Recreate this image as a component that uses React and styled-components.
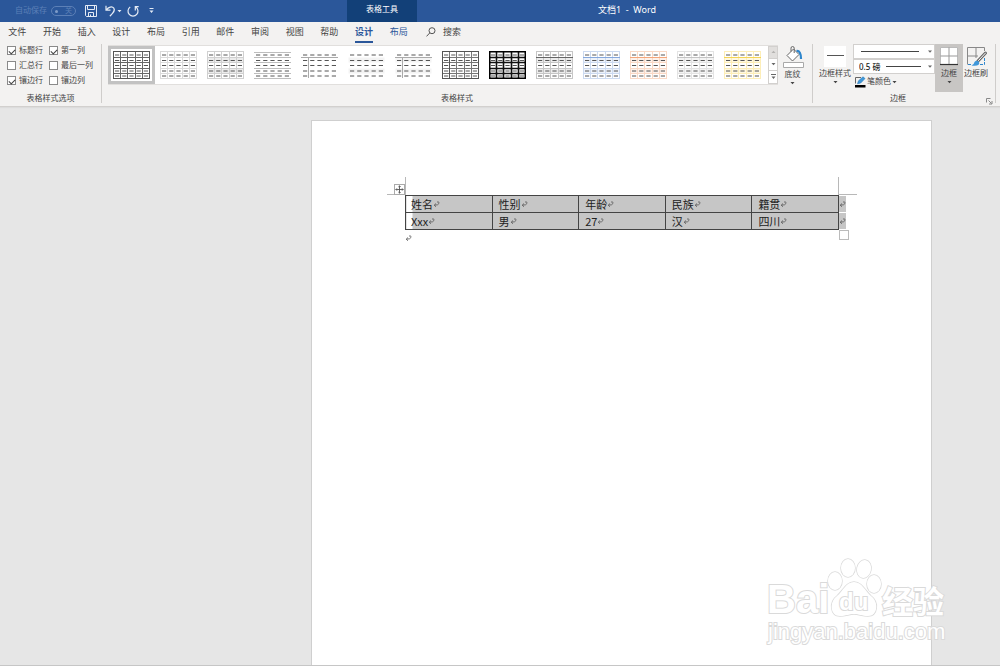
import React from 'react';
import styled, { createGlobalStyle } from 'styled-components';

// constants
const MENU_TABS = ['文件', '开始', '插入', '设计', '布局', '引用', '邮件', '审阅', '视图', '帮助'];

const STYLE_OPTIONS = [
  { id: 'header-row', label: '标题行', checked: true },
  { id: 'first-col', label: '第一列', checked: true },
  { id: 'total-row', label: '汇总行', checked: false },
  { id: 'last-col', label: '最后一列', checked: false },
  { id: 'banded-row', label: '镶边行', checked: true },
  { id: 'banded-col', label: '镶边列', checked: false },
];

const TABLE_STYLES = [
  { name: '网格型', grid: '#666', frame: '#555' },
  { name: '网格型浅色', grid: '#dadada', frame: '#dadada' },
  { name: '无格式表格 1', grid: '#d0d0d0', frame: '#d0d0d0', band: '#ececec' },
  { name: '无格式表格 2', rows: '#bdbdbd' },
  { name: '无格式表格 3', header: '#aaa', column: '#aaa' },
  { name: '无格式表格 4', band: '#f3f3f3' },
  { name: '无格式表格 5', header: '#aaa', column: '#aaa', band: '#f4f4f4' },
  { name: '网格表 1', grid: '#777', frame: '#555', column: '#555' },
  { name: '网格表 2', grid: '#111', frame: '#000', thick: true },
  { name: '网格表 3', grid: '#c6c6c6', frame: '#c6c6c6', header: '#666', band: '#ececec' },
  { name: '网格表 3 蓝色', grid: '#ccdaf0', frame: '#ccdaf0', header: '#86a8dc', band: '#edf2fa' },
  { name: '网格表 3 橙色', grid: '#fad9c6', frame: '#fad9c6', header: '#f4a77c', band: '#fdf1ea' },
  { name: '网格表 3 灰色', grid: '#e3e3e3', frame: '#e3e3e3', header: '#c4c4c4', band: '#f4f4f4' },
  { name: '网格表 3 金色', grid: '#fdeeb8', frame: '#fdeeb8', header: '#f5d556', band: '#fff8e0' },
];

const PEOPLE_HEAD = ['姓名', '性别', '年龄', '民族', '籍贯'];
const PEOPLE_ROW = ['Xxx', '男', '27', '汉', '四川'];

// y positions inside a style thumbnail
const THUMB_LINES = [6.5, 11.5, 17.5, 22.5];
const THUMB_DASHES = [4, 9.5, 14.5, 20, 25];

const GlobalStyle = createGlobalStyle`
  * {
    box-sizing: border-box;
  }

  body {
    margin: 0;
    font-family: 'Liberation Sans', 'Noto Sans CJK SC', sans-serif;
    font-size: 8px;
    color: #444;
  }

  button,
  select,
  input {
    margin: 0;
    padding: 0;
    border: 0;
    background: none;
    color: inherit;
    font: inherit;
  }

  svg {
    display: block;
  }
`;

const AppShell = styled.div`
  display: flex;
  flex-direction: column;
  min-height: 100vh;
  position: relative;
  background: #e6e6e6;
`;

// title bar
const TitleBar = styled.header`
  display: flex;
  height: 22px;
  background: #2b579a;
  color: #fff;
`;

const QuickAccess = styled.div`
  display: flex;
  align-items: center;
  flex: 0 0 347px;
  padding-left: 15px;
`;

const AutoSave = styled.label`
  display: flex;
  align-items: center;
  gap: 4px;
  margin-right: 9px;
  color: #5c80b7;
  line-height: 12px;
`;

const Toggle = styled.button`
  display: flex;
  align-items: center;
  justify-content: space-between;
  width: 25px;
  height: 10px;
  padding: 0 3px;
  border: 1px solid #5c80b7;
  border-radius: 5px;
  color: #5c80b7;
  font-size: 7px;
  line-height: 8px;

  &::before {
    content: '';
    width: 3px;
    height: 3px;
    border-radius: 50%;
    background: #7f9cc8;
  }
`;

const QuickButton = styled.button`
  margin-right: ${({ $after }) => $after || 0}px;
  color: #e4ebf5;
`;

const ContextTitle = styled.div`
  flex: 0 0 70px;
  background: #124078;
  line-height: 20px;
  text-align: center;
`;

const DocTitle = styled.h1`
  flex: 1;
  margin: 0;
  padding-right: 163px;
  font-family: 'Noto Sans', 'Noto Sans CJK SC', sans-serif;
  font-size: 9px;
  font-weight: 400;
  line-height: 20px;
  text-align: center;
  white-space: pre;
`;

// menu tabs
const TabBar = styled.nav`
  display: flex;
  align-items: center;
  height: 22px;
  background: #f3f2f1;
`;

const TabList = styled.div`
  display: grid;
  grid-template-columns: repeat(12, 1fr);
  justify-items: center;
  width: 416px;
`;

const Tab = styled.button`
  height: 20px;
  border-bottom: 2px solid ${({ $active }) => ($active ? '#2b579a' : 'transparent')};
  color: ${({ $context }) => ($context ? '#2b579a' : '#444')};
  font-size: 9px;
  font-weight: ${({ $active }) => ($active ? 700 : 400)};
  line-height: 18px;
`;

const SearchButton = styled.button`
  display: flex;
  align-items: center;
  gap: 7px;
  height: 20px;
  margin-left: 10px;
  padding-bottom: 2px;
  font-size: 9px;
  line-height: 18px;
`;

// ribbon
const Ribbon = styled.section`
  display: flex;
  min-height: 62px;
  border-bottom: 1px solid #d2d0ce;
  background: #f3f2f1;
  box-shadow: 0 1px 1px #dcdcdc;
`;

const Group = styled.div`
  display: flex;
  flex-direction: column;
  flex: ${({ $grow }) => ($grow ? '1' : 'none')};
  min-width: 0;
  position: relative;
`;

const GroupBody = styled.div`
  display: flex;
  height: 48px;
  padding: ${({ $pad }) => $pad || '0'};
`;

const GroupLabel = styled.div`
  padding-right: ${({ $launcher }) => ($launcher ? 12 : 0)}px;
  line-height: 14px;
  text-align: center;
`;

const Divider = styled.div`
  width: 1px;
  margin: 0 0 3px;
  background: #cfcdcb;
`;

const OptionGrid = styled.div`
  display: grid;
  grid-template-columns: 42px 45px;
  grid-auto-rows: 13px;
  row-gap: 2px;
`;

const Option = styled.label`
  display: flex;
  align-items: center;
  gap: 3px;
  line-height: 12px;
  white-space: nowrap;
`;

const CheckBox = styled.input`
  display: grid;
  place-content: center;
  appearance: none;
  width: 9px;
  height: 9px;
  border: 1px solid #8a8a8a;
  background: #fff;

  &:checked::before {
    content: '';
    width: 5px;
    height: 3px;
    border: solid #444;
    border-width: 0 0 1px 1px;
    transform: rotate(-45deg);
  }
`;

const Gallery = styled.div`
  display: flex;
  flex: 1;
  min-width: 0;
  height: 40px;
  border: solid #e1dfdd;
  border-width: 1px 0;
  background: #fff;
`;

const GalleryItems = styled.div`
  display: flex;
  flex: 1;
  overflow: hidden;
`;

const StyleButton = styled.button`
  display: flex;
  align-items: center;
  justify-content: center;
  flex: 0 0 47px;
  border: 3px solid ${({ $selected }) => ($selected ? '#c2c2c2' : 'transparent')};
`;

const GalleryScroll = styled.div`
  display: grid;
  grid-template-rows: repeat(3, 1fr);
  width: 10px;
`;

const ScrollButton = styled.button`
  display: grid;
  place-items: center;
  border: 1px solid #d2d0ce;
  border-top-width: ${({ $first }) => ($first ? 1 : 0)}px;
  background: ${({ $muted }) => ($muted ? '#e1dfdd' : '#fff')};
  color: ${({ $muted }) => ($muted ? '#b5b3b1' : '#666')};
`;

const BigButton = styled.button`
  display: flex;
  flex-direction: column;
  align-items: center;
  flex: 0 0 ${({ $width }) => $width}px;
  height: 48px;
  padding-top: 1px;
  background: ${({ $pressed }) => ($pressed ? '#c8c6c4' : 'none')};
  line-height: 13px;
  white-space: nowrap;
`;

const PenColumn = styled.div`
  display: flex;
  flex-direction: column;
  width: 82px;
`;

const PenField = styled.div`
  display: grid;
  align-items: center;
  height: 15px;
  border: 1px solid #d2d0ce;
  background: #fff;

  > * {
    grid-area: 1 / 1;
  }

  > svg {
    justify-self: end;
    pointer-events: none;
  }
`;

const PenSelect = styled.select`
  appearance: none;
  width: 100%;
  height: 13px;
  padding-left: 5px;
  color: #222;
  font-family: 'Noto Sans', 'Noto Sans CJK SC', sans-serif;
  font-weight: 500;
`;

const PenColor = styled.button`
  display: flex;
  align-items: center;
  gap: 1px;
  height: 15px;
  padding-left: 1px;
  line-height: 12px;
`;

const Launcher = styled.button`
  position: absolute;
  right: 2px;
  bottom: 1px;
`;

// document
const Workspace = styled.main`
  display: flex;
  flex: 1;
  padding: 13px 68px 0 311px;
  border-bottom: 1px solid #c6c6c6;
`;

const Page = styled.article`
  flex: 1;
  padding: 74px 92px 0 93px;
  border: 1px solid #cfcfcf;
  border-bottom: 0;
  background: #fff;
`;

const TableFrame = styled.div`
  position: relative;
`;

const DocTable = styled.table`
  width: 100%;
  border-collapse: collapse;
  table-layout: fixed;
  color: #222;
  font-family: 'Noto Sans CJK SC', sans-serif;
  font-size: 11px;
`;

const Cell = styled.td`
  height: 17px;
  padding: 0 0 0 6px;
  border: 1px solid #444;
  background: #c6c6c6;
  font-weight: 400;
  line-height: 16px;
  text-align: left;

  &:first-child {
    padding-left: 5px;
    background: linear-gradient(to right, #fff 6px, #c6c6c6 6px);
  }
`;

const CellText = styled.span`
  display: flex;
  align-items: center;
`;

const CropMark = styled.span`
  position: absolute;
  top: -18px;
  ${({ $side }) => $side}: 0;
  width: 1px;
  height: 18px;
  background: #b8b8b8;

  &::after {
    content: '';
    position: absolute;
    ${({ $side }) => $side}: -18px;
    bottom: 0;
    width: 18px;
    height: 1px;
    background: #b8b8b8;
  }
`;

const MoveHandle = styled.button`
  position: absolute;
  top: -11px;
  left: -11px;
  border: 1px solid #aaa;
  background: #fff;
`;

const RowEnds = styled.div`
  position: absolute;
  top: 1px;
  left: 100%;
  display: grid;
  gap: 1px;

  > span {
    display: grid;
    place-items: center;
    width: 7px;
    height: 16px;
    background: #c6c6c6;
  }
`;

const ResizeHandle = styled.button`
  position: absolute;
  top: 100%;
  left: 100%;
  width: 10px;
  height: 10px;
  border: 1px solid #bbb;
  background: #fff;
`;

const Paragraph = styled.p`
  margin: 4px 0;
`;

const Watermark = styled.div`
  position: absolute;
  right: 50px;
  bottom: 16px;
  pointer-events: none;
`;

// icons
const Caret = () => (
  <svg width="5" height="4" viewBox="0 0 5 4">
    <path d="M0.5 1h4L2.5 3.2z" fill="currentColor" />
  </svg>
);

const ReturnMark = () => (
  <svg width="7" height="8" viewBox="0 0 7 8" fill="none" stroke="#555" strokeWidth="0.8">
    <path d="M4 2h1.400q.9 0 .6 1.400Q5.500 5.200 1.400 5.200M3 3.500L1.200 5.200 3 6.800" />
  </svg>
);

const SaveIcon = () => (
  <svg width="12" height="12" viewBox="0 0 12 12" fill="none" stroke="currentColor">
    <path d="M.5.5h11v11h-10l-1-1zM2.500.5v4h7v-4M3.500 11.500v-4h5v4M5.500 9.500v2" />
  </svg>
);

const UndoIcon = () => (
  <svg width="11" height="12" viewBox="0 0 11 12" fill="none" stroke="currentColor" strokeWidth="1.200">
    <path d="M1 .8v4.400h4.500M1.200 5C3.500 1.800 7.200 1 8.800 3.200c1.800 2.600-.8 4.800-4 8" />
  </svg>
);

const RedoIcon = () => (
  <svg width="12" height="12" viewBox="0 0 12 12" fill="none" stroke="currentColor" strokeWidth="1.200">
    <path d="M3.200 2a5 5 0 1 0 5.600 0M8.300 5.500V1.700h3.400" />
  </svg>
);

const SearchIcon = () => (
  <svg width="10" height="10" viewBox="0 0 10 10" fill="none" stroke="#555">
    <circle cx="6" cy="3.700" r="3" />
    <path d="M3.800 5.900L.5 9.400" />
  </svg>
);

const BucketIcon = () => (
  <svg width="22" height="22" viewBox="0 0 22 22" fill="none" stroke="#666">
    <path d="M5 9.500L11.500 3l5.500 5.500-6.500 6.500z" fill="#fff" />
    <path d="M9 5.500V2.200q0-1.700 1.600-1.700T12.200 2.200V7" />
    <path d="M14.500 5q4.500-.5 4.500 8" stroke="#2e86cc" strokeWidth="2.200" />
    <path d="M1.500 16.500h20v5h-20z" fill="#fff" stroke="#a9a9a9" />
  </svg>
);

const BorderStyleIcon = () => (
  <svg width="22" height="22" viewBox="0 0 22 22">
    <path d="M0 1h22v21H0z" fill="#fff" />
    <path d="M3 10.500h17" stroke="#555" />
  </svg>
);

const BordersIcon = () => (
  <svg width="20" height="22" viewBox="0 0 20 22" fill="none">
    <path d="M1.500 2.500h17v17h-17z" fill="#fff" stroke="#bbb" />
    <path d="M10 2.500v17M1.500 11h17" stroke="#999" />
    <path d="M1 19.500h18" stroke="#333" strokeWidth="1.200" />
  </svg>
);

const BorderPainterIcon = () => (
  <svg width="22" height="22" viewBox="0 0 22 22" fill="none">
    <path d="M2.500 19.500v-17h17V6M11 2.500V13M2.500 11H13" stroke="#888" />
    <path d="M3 19.500h4M15 19.500h4.500V13" stroke="#2e86cc" strokeDasharray="3 1" />
    <path d="M20.500 8L13 16" stroke="#666" strokeWidth="3" strokeLinecap="round" />
    <path d="M20.500 8L13.500 15.500" stroke="#fff" strokeLinecap="round" />
    <path d="M6.500 20.500q2.500-.5 3-3.500 2-2.500 4.500-.3 1.800 4.800-7.500 3.800z" fill="#3f97d9" />
  </svg>
);

const PenIcon = () => (
  <svg width="12" height="12" viewBox="0 0 12 12" fill="none">
    <path d="M7 1.500H1.500v6" stroke="#666" />
    <path d="M3.500 7.800l1-3L9 .8l2 1.800-4.300 4.400z" fill="#3f97d9" stroke="#2779b8" strokeWidth=".6" />
    <path d="M1 9h10.500v2.500H1z" fill="#000" />
  </svg>
);

const MoveIcon = () => (
  <svg width="9" height="9" viewBox="0 0 9 9" fill="none" stroke="#555" strokeWidth="0.900">
    <path d="M4.500.8v7.400M.8 4.500h7.400M3.400 1.900l1.100-1.100 1.100 1.100M3.400 7.100l1.100 1.100 1.100-1.100M1.900 3.400L.8 4.500l1.100 1.100M7.100 3.400l1.100 1.100-1.100 1.100" />
  </svg>
);

const LauncherIcon = () => (
  <svg width="7" height="7" viewBox="0 0 7 7" fill="none" stroke="#888">
    <path d="M.5 4.500v-4h4M2.500 2.500l3 3M6 3v3H3" />
  </svg>
);

const StyleThumb = ({ grid, frame, header, column, rows, band, thick }) => {
  const lines = [0, 1, 2, 3, 4];
  return (
    <svg width="37" height="28" viewBox="0 0 37 28" fill="none">
      {thick && <rect width="37" height="28" fill="#fff" />}
      {band && (
        <path d="M.5 6.500h36v5h-36zM.5 17.500h36v5h-36z" fill={band} />
      )}
      {grid && (
        <path
          d={`M7.500 .5v27M14.500 .5v27M22.500 .5v27M29.500 .5v27${THUMB_LINES.map((y) => `M.5 ${y}h36`).join('')}`}
          stroke={grid}
          strokeWidth={thick ? 1.6 : 1}
        />
      )}
      {frame && <rect x=".5" y=".5" width="36" height="27" stroke={frame} strokeWidth={thick ? 2 : 1} />}
      {rows && [1.5, ...THUMB_LINES, 27.5].map((y) => (
        <path key={y} d={`M0 ${y}h37`} stroke={rows} />
      ))}
      {column && <path d="M7.500 6v21" stroke={column} />}
      {header && <path d="M0 6.500h37" stroke={header} />}
      {THUMB_DASHES.map((y) => lines.map((c) => (
        <path key={`${y}-${c}`} d={`M${c * 7.2 + 2} ${y}h4.200`} stroke="#555" />
      )))}
    </svg>
  );
};

const BaiduMark = () => (
  <svg
    width="186"
    height="94"
    viewBox="0 0 186 94"
    fill="#fff"
    stroke="#dadada"
    strokeWidth="2"
    paintOrder="stroke"
    fontFamily="Liberation Sans, Noto Sans CJK SC, sans-serif"
    fontWeight="700"
  >
    <text x="3" y="57" fontSize="40">Bai</text>
    <g strokeWidth="1.500">
      <ellipse cx="71" cy="25" rx="7" ry="9" />
      <ellipse cx="84" cy="12" rx="7" ry="9" />
      <ellipse cx="100" cy="13" rx="7" ry="9" transform="rotate(12 100 13)" />
      <ellipse cx="110" cy="28" rx="7" ry="9" />
      <path d="M90 26c8 0 11 9 17 14 8 6 7 20-3 20-6 0-9-2-14-2s-8 2-14 2c-10 0-11-14-3-20 6-5 9-14 17-14z" />
    </g>
    <text x="75" y="54" fontSize="24">du</text>
    <text x="118" y="57" fontSize="31">经验</text>
    <text x="4" y="83" fontSize="22" fontWeight="400">jingyan.baidu.com</text>
  </svg>
);

const App = () => (
  <AppShell>
    <GlobalStyle />
    <TitleBar>
      <QuickAccess>
        <AutoSave htmlFor="autosave">
          自动保存
          <Toggle id="autosave">关</Toggle>
        </AutoSave>
        <QuickButton aria-label="保存" $after={8}><SaveIcon /></QuickButton>
        <QuickButton aria-label="撤消" $after={1}><UndoIcon /></QuickButton>
        <QuickButton aria-label="撤消列表" $after={5}><Caret /></QuickButton>
        <QuickButton aria-label="恢复" $after={10}><RedoIcon /></QuickButton>
        <QuickButton aria-label="自定义快速访问工具栏">
          <svg width="5" height="6" viewBox="0 0 5 6" fill="currentColor">
            <path d="M.5 0h4v1h-4zM.5 2.500h4l-2 2.500z" />
          </svg>
        </QuickButton>
      </QuickAccess>
      <ContextTitle>表格工具</ContextTitle>
      <DocTitle>{'文档1  -  Word'}</DocTitle>
    </TitleBar>

    <TabBar>
      <TabList>
        {MENU_TABS.map((tab) => <Tab key={tab}>{tab}</Tab>)}
        <Tab $context $active>设计</Tab>
        <Tab $context>布局</Tab>
      </TabList>
      <SearchButton>
        <SearchIcon />
        搜索
      </SearchButton>
    </TabBar>

    <Ribbon>
      <Group>
        <GroupBody $pad="0 7px">
          <OptionGrid>
            {STYLE_OPTIONS.map(({ id, label, checked }) => (
              <Option key={id} htmlFor={id}>
                <CheckBox type="checkbox" id={id} defaultChecked={checked} />
                {label}
              </Option>
            ))}
          </OptionGrid>
        </GroupBody>
        <GroupLabel>表格样式选项</GroupLabel>
      </Group>
      <Divider />

      <Group $grow>
        <GroupBody $pad="1px 5px 0 6px">
          <Gallery>
            <GalleryItems>
              {TABLE_STYLES.map(({ name, ...look }, i) => (
                <StyleButton key={name} aria-label={name} $selected={i === 0}>
                  <StyleThumb {...look} />
                </StyleButton>
              ))}
            </GalleryItems>
            <GalleryScroll>
              <ScrollButton aria-label="上一行" $first $muted>
                <svg width="5" height="4" viewBox="0 0 5 4"><path d="M.5 3h4l-2-2.200z" fill="currentColor" /></svg>
              </ScrollButton>
              <ScrollButton aria-label="下一行"><Caret /></ScrollButton>
              <ScrollButton aria-label="其他">
                <svg width="5" height="6" viewBox="0 0 5 6"><path d="M0 0h5v1H0zM.5 2.500h4l-2 2.500z" fill="currentColor" /></svg>
              </ScrollButton>
            </GalleryScroll>
          </Gallery>
          <BigButton $width={29}>
            <BucketIcon />
            <span>底纹</span>
            <Caret />
          </BigButton>
        </GroupBody>
        <GroupLabel>表格样式</GroupLabel>
      </Group>
      <Divider />

      <Group>
        <GroupBody $pad="0 6px 0 4px">
          <BigButton $width={36}>
            <BorderStyleIcon />
            <span>边框样式</span>
            <Caret />
          </BigButton>
          <PenColumn>
            <PenField>
              <PenSelect aria-label="笔样式"><option aria-label="单实线" /></PenSelect>
              <svg width="76" height="5" viewBox="0 0 76 5">
                <path d="M3 2.500h58" stroke="#444" />
                <path d="M70 1.500h4l-2 2.200z" fill="#666" />
              </svg>
            </PenField>
            <PenField>
              <PenSelect aria-label="笔划粗细"><option>0.5 磅</option></PenSelect>
              <svg width="48" height="5" viewBox="0 0 48 5">
                <path d="M0 2.500h35" stroke="#444" />
                <path d="M42 1.500h4l-2 2.200z" fill="#666" />
              </svg>
            </PenField>
            <PenColor>
              <PenIcon />
              笔颜色
              <Caret />
            </PenColor>
          </PenColumn>
          <BigButton $width={28} $pressed>
            <BordersIcon />
            <span>边框</span>
            <Caret />
          </BigButton>
          <BigButton $width={26}>
            <BorderPainterIcon />
            <span>边框刷</span>
          </BigButton>
        </GroupBody>
        <GroupLabel $launcher>边框</GroupLabel>
        <Launcher aria-label="边框和底纹"><LauncherIcon /></Launcher>
      </Group>
      <Divider />
      <Group><GroupBody $pad="0 2px" /></Group>
    </Ribbon>

    <Workspace>
      <Page>
        <TableFrame>
          <CropMark $side="left" />
          <CropMark $side="right" />
          <MoveHandle aria-label="移动表格"><MoveIcon /></MoveHandle>
          <DocTable>
            <thead>
              <tr>
                {PEOPLE_HEAD.map((text) => (
                  <Cell as="th" key={text}><CellText>{text}<ReturnMark /></CellText></Cell>
                ))}
              </tr>
            </thead>
            <tbody>
              <tr>
                {PEOPLE_ROW.map((text) => (
                  <Cell key={text}><CellText>{text}<ReturnMark /></CellText></Cell>
                ))}
              </tr>
            </tbody>
          </DocTable>
          <RowEnds>
            <span><ReturnMark /></span>
            <span><ReturnMark /></span>
          </RowEnds>
          <ResizeHandle aria-label="调整表格大小" />
        </TableFrame>
        <Paragraph><ReturnMark /></Paragraph>
      </Page>
    </Workspace>

    <Watermark>
      <BaiduMark />
    </Watermark>
  </AppShell>
);

export default App;
